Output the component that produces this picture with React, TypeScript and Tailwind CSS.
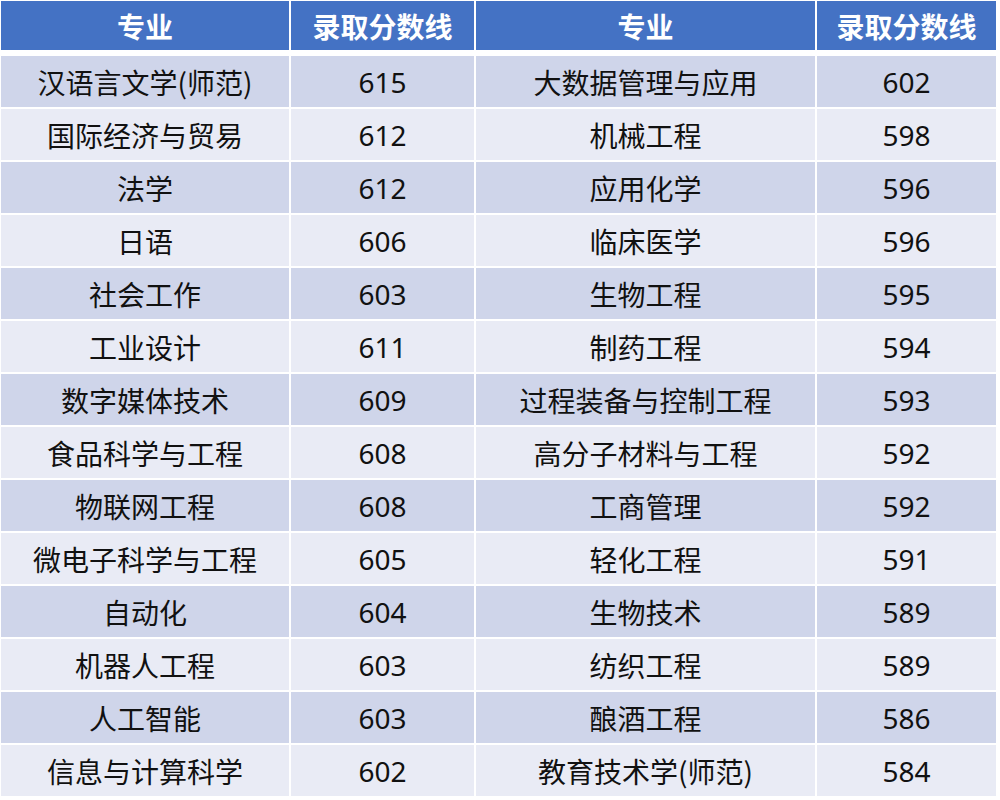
const rows: [string, string, string, string][] = [
  ['汉语言文学(师范)', '615', '大数据管理与应用', '602'],
  ['国际经济与贸易', '612', '机械工程', '598'],
  ['法学', '612', '应用化学', '596'],
  ['日语', '606', '临床医学', '596'],
  ['社会工作', '603', '生物工程', '595'],
  ['工业设计', '611', '制药工程', '594'],
  ['数字媒体技术', '609', '过程装备与控制工程', '593'],
  ['食品科学与工程', '608', '高分子材料与工程', '592'],
  ['物联网工程', '608', '工商管理', '592'],
  ['微电子科学与工程', '605', '轻化工程', '591'],
  ['自动化', '604', '生物技术', '589'],
  ['机器人工程', '603', '纺织工程', '589'],
  ['人工智能', '603', '酿酒工程', '586'],
  ['信息与计算科学', '602', '教育技术学(师范)', '584'],
];

const headers = ['专业', '录取分数线', '专业', '录取分数线'];

export default function App() {
  return (
    <div className="h-[800px] w-[1000px] bg-white pl-px pt-px font-['Microsoft_YaHei','Noto_Sans_CJK_SC',sans-serif]">
      <div className="grid w-[995px] grid-cols-[288px_183px_339px_179px] gap-x-[2px] gap-y-[2px]">
        {headers.map((h, i) => (
          <div
            key={i}
            className="mb-[4px] flex h-[49px] items-center justify-center bg-[#4472c4] text-[28px] font-bold text-white"
          >
            {h}
          </div>
        ))}
        {rows.map((r, ri) =>
          r.map((cell, ci) => (
            <div
              key={`${ri}-${ci}`}
              className={`flex h-[51px] items-center justify-center text-[28px] text-[#111] ${
                ci % 2 === 1 ? "font-['Noto_Sans',sans-serif]" : ''
              } ${ri % 2 === 0 ? 'bg-[#cfd5ea]' : 'bg-[#e9ebf5]'}`}
            >
              {cell}
            </div>
          ))
        )}
      </div>
    </div>
  );
}
